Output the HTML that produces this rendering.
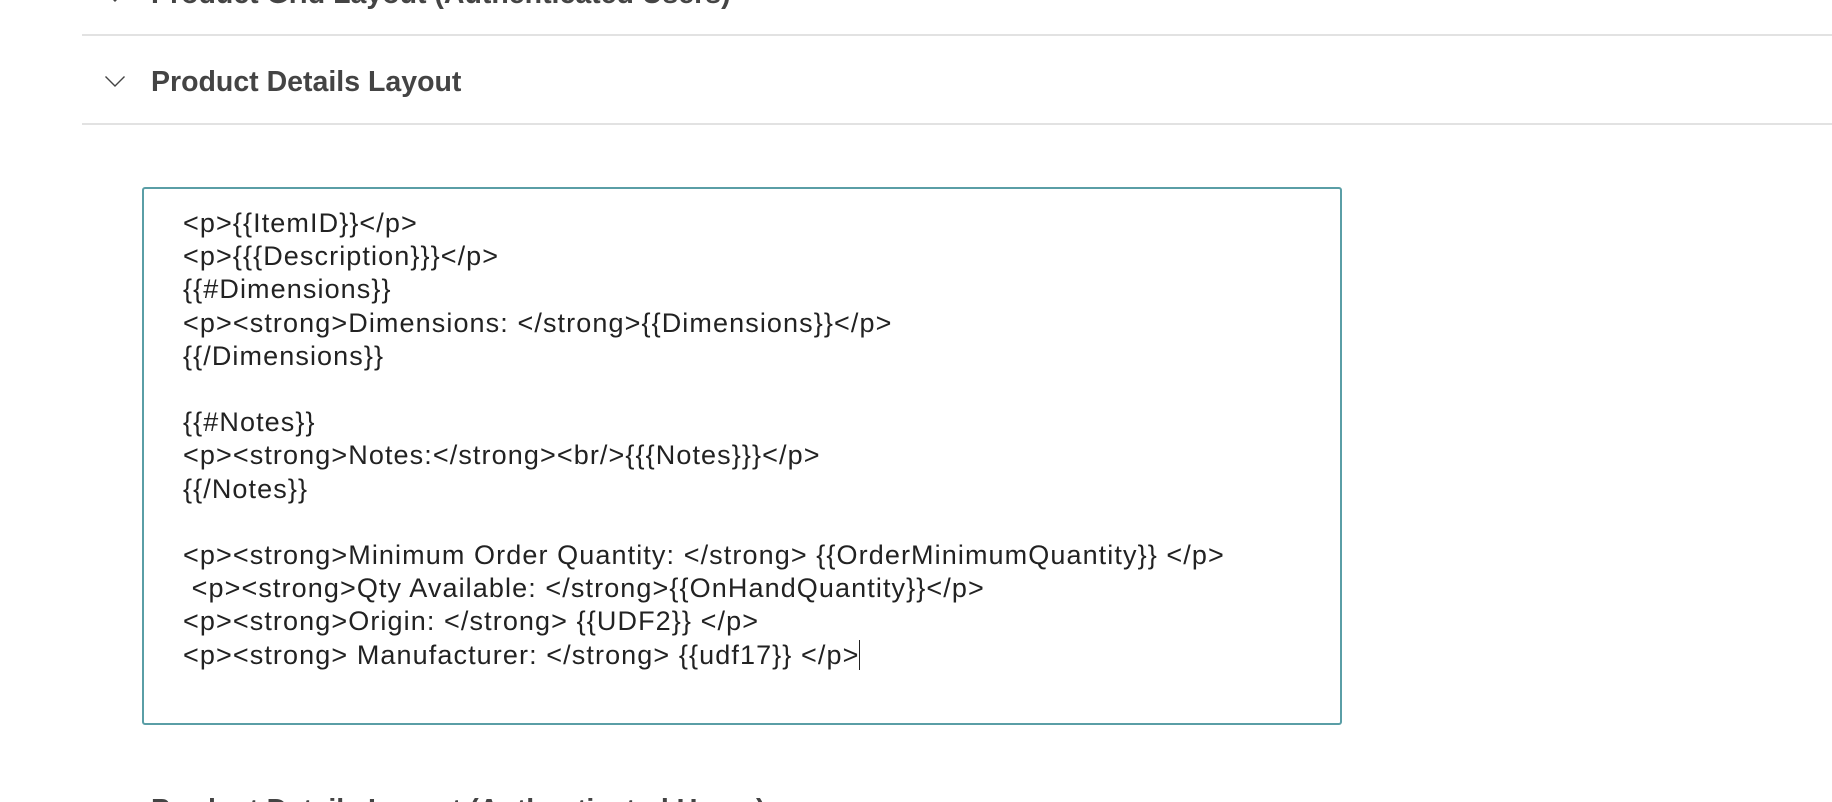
<!DOCTYPE html>
<html><head><meta charset="utf-8"><style>
html,body{margin:0;padding:0;background:#fff;width:1832px;height:802px;overflow:hidden;position:relative;font-family:"Liberation Sans",Arial,sans-serif}
.line{position:absolute;left:82px;right:0;height:2px;background:#e2e2e2}
.h{position:absolute;left:151px;font-size:28.5px;font-weight:bold;color:#444;white-space:nowrap;line-height:32px}
.chev{position:absolute;left:104px;width:22px;height:13px}
.ta{position:absolute;left:142px;top:187px;width:1200px;height:538px;border:2px solid #5a9ea6;border-radius:3px;box-sizing:border-box}
.txt{position:absolute;left:183px;top:207px;font-size:27px;letter-spacing:1.1px;line-height:33.2px;color:#222;white-space:pre}
.cur{display:inline-block;width:1px;height:30px;background:#222;vertical-align:-6px}
</style></head><body>
<div class="h" style="top:-22px">Product Grid Layout (Authenticated Users)</div>
<svg class="chev" style="top:-10px" viewBox="0 0 22 13"><path d="M1.5 1.5 L11 11 L20.5 1.5" fill="none" stroke="#444" stroke-width="1.4"/></svg>
<div class="line" style="top:34px"></div>
<svg class="chev" style="top:75px" viewBox="0 0 22 13"><path d="M1.5 1.5 L11 11 L20.5 1.5" fill="none" stroke="#444" stroke-width="1.4"/></svg>
<div class="h" style="top:66px">Product Details Layout</div>
<div class="line" style="top:123px"></div>
<div class="ta"></div>
<div class="txt">&lt;p&gt;{{ItemID}}&lt;/p&gt;
&lt;p&gt;{{{Description}}}&lt;/p&gt;
{{#Dimensions}}
&lt;p&gt;&lt;strong&gt;Dimensions: &lt;/strong&gt;{{Dimensions}}&lt;/p&gt;
{{/Dimensions}}

{{#Notes}}
&lt;p&gt;&lt;strong&gt;Notes:&lt;/strong&gt;&lt;br/&gt;{{{Notes}}}&lt;/p&gt;
{{/Notes}}

&lt;p&gt;&lt;strong&gt;Minimum Order Quantity: &lt;/strong&gt; {{OrderMinimumQuantity}} &lt;/p&gt;
 &lt;p&gt;&lt;strong&gt;Qty Available: &lt;/strong&gt;{{OnHandQuantity}}&lt;/p&gt;
&lt;p&gt;&lt;strong&gt;Origin: &lt;/strong&gt; {{UDF2}} &lt;/p&gt;
&lt;p&gt;&lt;strong&gt; Manufacturer: &lt;/strong&gt; {{udf17}} &lt;/p&gt;<span class="cur"></span></div>
<svg class="chev" style="top:802px" viewBox="0 0 22 13"><path d="M1.5 1.5 L11 11 L20.5 1.5" fill="none" stroke="#444" stroke-width="1.4"/></svg>
<div class="h" style="top:794px">Product Details Layout (Authenticated Users)</div>
</body></html>
